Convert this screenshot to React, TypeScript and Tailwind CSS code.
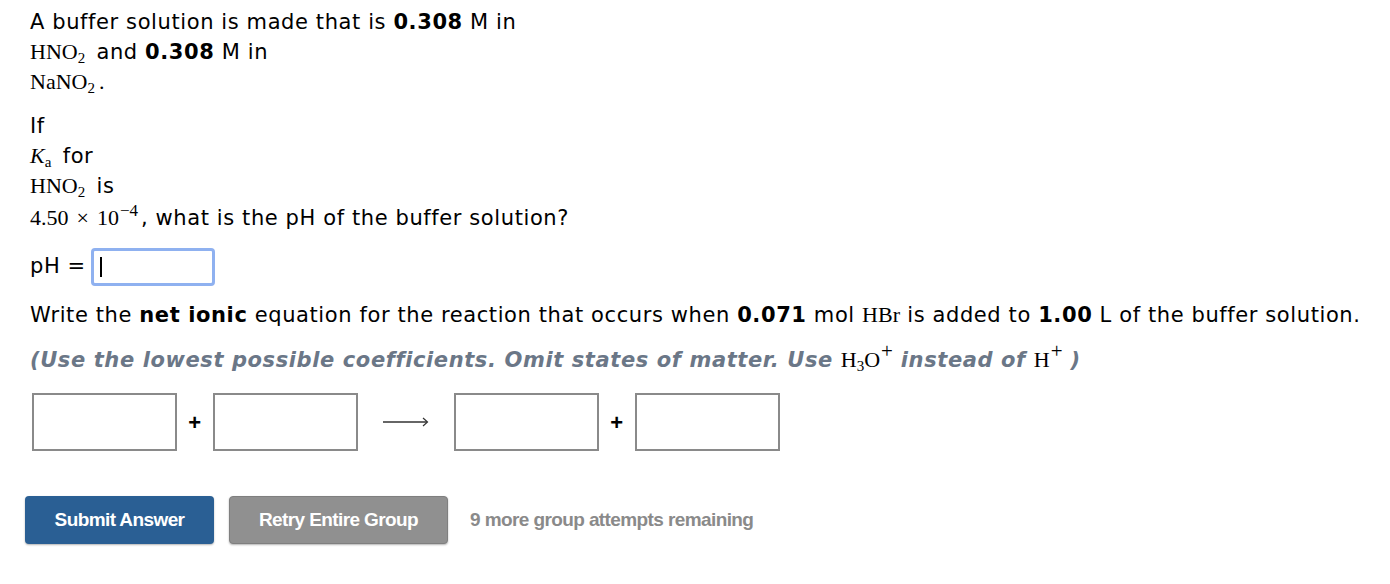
import React from "react";

const M = ({ children }: { children: React.ReactNode }) => (
  <span className="font-['Liberation_Serif',serif] text-[22px] tracking-normal">{children}</span>
);
const Sub = ({ children }: { children: React.ReactNode }) => (
  <span className="text-[15px] relative top-[4px] leading-none mr-[4px]">{children}</span>
);
const SubTight = ({ children }: { children: React.ReactNode }) => (
  <span className="text-[15px] relative top-[4px] leading-none">{children}</span>
);
const Sup = ({ children }: { children: React.ReactNode }) => (
  <span className="text-[17px] relative top-[-9px] leading-none ml-[1px] mr-[3px]">{children}</span>
);
const Plus = () => (
  <span className="text-[21px] relative top-[-9px] leading-none ml-[1px]">+</span>
);

const Box = () => <div className="w-[145px] h-[58px] border-2 border-[#8a8a8a] bg-white" />;

export default function App() {
  return (
    <div className="w-[1390px] h-[584px] bg-white text-black font-['DejaVu_Sans','Verdana',sans-serif] text-[21px] tracking-[0.6px] pl-[30px] pt-[7px]">
      <div className="leading-[30px]">
        <div>A buffer solution is made that is <b>0.308</b> M in</div>
        <div><M>HNO<Sub>2</Sub></M> and <b>0.308</b> M in</div>
        <div><M>NaNO<Sub>2</Sub>.</M></div>
      </div>
      <div className="leading-[30px] mt-[14px]">
        <div>If</div>
        <div><M><i>K</i><Sub>a</Sub></M> for</div>
        <div><M>HNO<Sub>2</Sub></M> is</div>
        <div className="mt-[2px]">
          <M>4.50<span className="mx-[8px]">×</span>10<Sup>−4</Sup></M>, what is the pH of the buffer solution?
        </div>
      </div>
      <div className="flex items-center mt-[14px] h-[40px]">
        <span>pH =</span>
        <div className="ml-[5px] w-[124px] h-[38px] rounded-[4px] border-[3px] border-[#8fb1f0] bg-white flex items-center pl-[6px]">
          <div className="w-[2px] h-[20px] bg-black" />
        </div>
      </div>
      <div className="mt-[13px] leading-[30px]">
        Write the <b>net ionic</b> equation for the reaction that occurs when <b>0.071</b> mol <M>HBr</M> is added to <b>1.00</b> L of the buffer solution.
      </div>
      <div className="mt-[15px] leading-[30px] italic font-bold text-[#6b7787]">
        (Use the lowest possible coefficients. Omit states of matter. Use{" "}
        <span className="not-italic font-normal text-black"><M>H<SubTight>3</SubTight>O<Plus /></M></span>{" "}instead of{" "}
        <span className="not-italic font-normal text-black"><M>H<Plus /></M></span>{" "})
      </div>
      <div className="flex items-center mt-[18px] ml-[2px]">
        <Box />
        <span className="w-[36px] text-center font-bold text-[22px] font-['Liberation_Sans',sans-serif]">+</span>
        <Box />
        <span className="w-[96px] flex justify-center">
          <svg width="46" height="12" viewBox="0 0 46 12">
            <line x1="0" y1="6" x2="44" y2="6" stroke="#333" strokeWidth="1.5" />
            <path d="M40 2 L44.5 6 L40 10" fill="none" stroke="#333" strokeWidth="1.2" />
          </svg>
        </span>
        <Box />
        <span className="w-[36px] text-center font-bold text-[22px] font-['Liberation_Sans',sans-serif]">+</span>
        <Box />
      </div>
      <div className="flex items-center mt-[45px] -ml-[5px] font-['Liberation_Sans',sans-serif] tracking-normal">
        <button className="w-[189px] h-[48px] rounded-[4px] bg-[#2a5f94] text-white font-bold text-[19px] tracking-[-0.6px] shadow-[0_1px_2px_rgba(0,0,0,0.3)]">
          Submit Answer
        </button>
        <button className="ml-[15px] w-[219px] h-[48px] rounded-[4px] bg-[#909090] border border-[#7f7f7f] text-white font-bold text-[19px] tracking-[-0.6px] shadow-[0_1px_2px_rgba(0,0,0,0.3)]">
          Retry Entire Group
        </button>
        <span className="ml-[22px] text-[#8a8a8a] font-bold text-[19px] tracking-[-0.6px]">9 more group attempts remaining</span>
      </div>
    </div>
  );
}
